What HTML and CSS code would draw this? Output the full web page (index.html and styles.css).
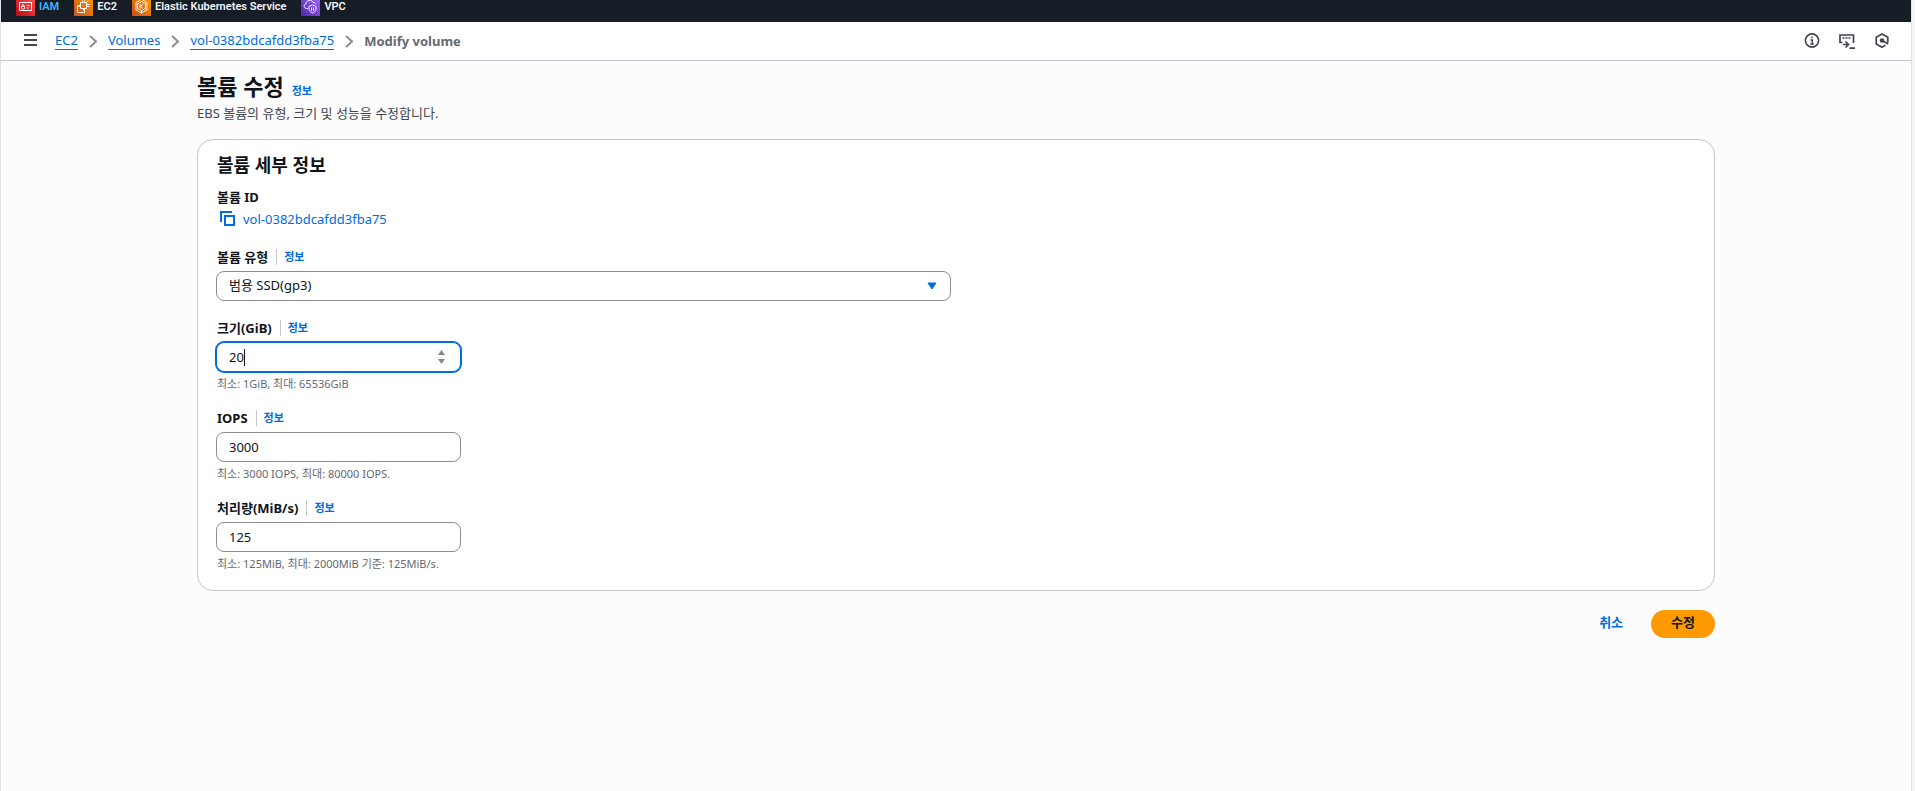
FILE: index.html
```html
<!DOCTYPE html>
<html lang="ko">
<head>
<meta charset="utf-8">
<title>볼륨 수정</title>
<link rel="stylesheet" href="styles.css">
</head>
<body>
<div class="shell">
  <nav class="services" aria-label="Favorites">
    <a class="service service-current" href="#iam">
      <svg class="service-icon" viewBox="0 0 19 19"><defs><linearGradient id="red" x1="0" y1="1" x2="1" y2="0"><stop stop-color="#bd0816"/><stop offset="1" stop-color="#ff5252"/></linearGradient></defs><rect width="19" height="19" fill="url(#red)"/><g fill="none" stroke="#fff"><path d="M3.500 5.500h12v8h-12z"/><path d="M5.500 9.500h3v2.500h-3zM6 9.500v-1.500q1-1 2 0v1.500M10.500 8.500h3.500M10.500 11h2.500" stroke-width=".8"/></g></svg>
      <span>IAM</span></a>
    <a class="service" href="#ec2">
      <svg class="service-icon" viewBox="0 0 19 19"><defs><linearGradient id="orange" x1="0" y1="1" x2="1" y2="0"><stop stop-color="#c8511b"/><stop offset="1" stop-color="#ff9900"/></linearGradient></defs><rect width="19" height="19" fill="url(#orange)"/><g fill="none" stroke="#fff"><path d="M6.500 5.500h6v6h-6z"/><path d="M6.500 8.500h-3v7h7v-4M8.500 5.500v-2M10.500 5.500v-2M12.500 7.500h3M12.500 9.500h3M9.500 11.500v2M6.500 9.500h-2M12.500 5.500l2-2" stroke-width=".9"/></g></svg>
      <span>EC2</span></a>
    <a class="service" href="#eks">
      <svg class="service-icon" viewBox="0 0 19 19"><rect width="19" height="19" fill="url(#orange)"/><g fill="none" stroke="#fff" stroke-width=".9"><path d="M8.500 3L4 5.500v7.500l5.500 3 5.500-3V5.500L10.500 3"/><path d="M9.500 4.500l4 2.300v4.600l-4 2.300-4-2.300V6.800z"/><path d="M8 7v4.500M11 7L8.500 9.200 11 11.500M9.500 13.500V16"/></g></svg>
      <span>Elastic Kubernetes Service</span></a>
    <a class="service" href="#vpc">
      <svg class="service-icon" viewBox="0 0 19 19"><defs><linearGradient id="purple" x1="0" y1="1" x2="1" y2="0"><stop stop-color="#4d27aa"/><stop offset="1" stop-color="#a166ff"/></linearGradient></defs><rect width="19" height="19" fill="url(#purple)"/><g fill="none" stroke="#fff" stroke-width=".9"><path d="M7 11.500H5.500C2.500 11 2.500 7.500 5 7c0-4 5.500-5 7-1.500 1.500-.3 2.500.5 2.500 1.500"/><path d="M11.500 8l3.500 1.300v3c0 2-2 3-3.500 3.700-1.500-.7-3.500-1.700-3.500-3.700v-3zM10.500 10.500v3.500M12.500 10.500v3.500"/></g></svg>
      <span>VPC</span></a>
  </nav>
  <header class="toolbar">
    <button class="icon-button" type="button" aria-label="Menu"><svg width="16" height="16" viewBox="0 0 16 16"><path d="M1 2h13M1 7h13M1 12h13" stroke="#424650" stroke-width="2"/></svg></button>
    <nav class="crumbs" aria-label="Breadcrumb">
      <a href="#ec2-home">EC2</a>
      <svg class="chevron" viewBox="0 0 8 13"><path d="M1 1l6 5.500L1 12"/></svg>
      <a href="#volumes">Volumes</a>
      <svg class="chevron" viewBox="0 0 8 13"><path d="M1 1l6 5.500L1 12"/></svg>
      <a href="#volume">vol-0382bdcafdd3fba75</a>
      <svg class="chevron" viewBox="0 0 8 13"><path d="M1 1l6 5.500L1 12"/></svg>
      <span class="crumb-current">Modify volume</span>
    </nav>
    <div class="tools">
      <button class="icon-button" type="button" aria-label="Info"><svg width="16" height="16" viewBox="0 0 16 16" fill="none" stroke="#424650" stroke-width="1.600"><circle cx="8" cy="7.500" r="6.600"/><path d="M8 3.500v1.800M6.500 7h1.800v4M6.300 11h3.600" stroke-width="1.400"/></svg></button>
      <button class="icon-button" type="button" aria-label="CloudShell"><svg width="16" height="16" viewBox="0 0 16 16" fill="none" stroke="#424650" stroke-width="1.700"><path d="M3.500 9.500H1V2h13.500v8"/><path d="M3.500 5h2M6.500 5h2M9.500 5h2M4 11.500h5M6.500 8.500l3 3-3 3M10.500 15.100h5.500"/></svg></button>
      <button class="icon-button" type="button" aria-label="Amazon Q"><svg width="16" height="16" viewBox="0 0 16 16" fill="none" stroke="#424650" stroke-width="1.700"><path d="M13.800 9.500V4.300L8 1 2.200 4.300v6.600L8 14.200l3.400-1.900M8 7.500l6.200 3.600"/><circle cx="8" cy="7.500" r="1.400" fill="#424650"/></svg></button>
    </div>
  </header>
  <main class="content">
    <div class="page-title">
      <div class="title-row"><h1>볼륨 수정</h1><a class="info" href="#info">정보</a></div>
      <p class="description">EBS 볼륨의 유형, 크기 및 성능을 수정합니다.</p>
    </div>
    <form class="form">
      <section class="card">
        <h2>볼륨 세부 정보</h2>
        <div class="volume-id">
          <div class="label">볼륨 ID</div>
          <div class="id-row">
            <button class="icon-button" type="button" aria-label="복사"><svg width="16" height="16" viewBox="0 0 16 16" fill="none" stroke="#006ce0" stroke-width="2"><path d="M5 5h9v9H5zM1 11V1h11"/></svg></button>
            <a href="#vol">vol-0382bdcafdd3fba75</a>
          </div>
        </div>
        <div class="fields">
          <div class="field">
            <div class="label-row"><label class="label" for="type">볼륨 유형</label><a class="info divided" href="#type-info">정보</a></div>
            <div class="control"><select id="type" class="input"><option>범용 SSD(gp3)</option></select>
              <svg class="caret-down" viewBox="0 0 10 8"><path d="M1 1h8L5 7z" fill="#006ce0" stroke="#006ce0" stroke-linejoin="round"/></svg></div>
          </div>
          <div class="field">
            <div class="label-row"><label class="label" for="size">크기(GiB)</label><a class="info divided" href="#size-info">정보</a></div>
            <div class="control narrow"><input id="size" class="input focused" type="number" value="20">
              <span class="text-cursor"></span>
              <svg class="stepper" viewBox="0 0 13 16"><path fill="#fafafa" d="M0 0h13v16H0z"/><path d="M6.500 1l3.500 5H3zM6.500 15L3 10h7z" fill="#888"/></svg></div>
            <p class="hint">최소: 1GiB, 최대: 65536GiB</p>
          </div>
          <div class="field">
            <div class="label-row"><label class="label" for="iops">IOPS</label><a class="info divided" href="#iops-info">정보</a></div>
            <div class="control narrow"><input id="iops" class="input" type="number" value="3000"></div>
            <p class="hint">최소: 3000 IOPS, 최대: 80000 IOPS.</p>
          </div>
          <div class="field">
            <div class="label-row"><label class="label" for="rate">처리량(MiB/s)</label><a class="info divided" href="#rate-info">정보</a></div>
            <div class="control narrow"><input id="rate" class="input" type="number" value="125"></div>
            <p class="hint">최소: 125MiB, 최대: 2000MiB 기준: 125MiB/s.</p>
          </div>
        </div>
      </section>
      <div class="actions">
        <button class="button" type="button">취소</button>
        <button class="button primary" type="submit">수정</button>
      </div>
    </form>
  </main>
</div>
</body>
</html>
```
FILE: styles.css
```css
* { box-sizing: border-box; }
body {
  margin: 0;
  background: #f4f4f5;
  color: #0f141a;
  font: 13px/20px "Noto Sans", "Noto Sans CJK KR", sans-serif;
}
h1, h2, p { margin: 0; }
a { color: #006ce0; text-decoration: none; }
svg { display: block; flex: none; }
button, input, select { font: inherit; color: inherit; }
.shell {
  min-height: 100vh;
  margin-right: 3px;
  background: #fcfcfd;
  border: solid #e2e2e4;
  border-width: 0 1px;
}
.services {
  display: flex;
  align-items: flex-start;
  gap: 15px;
  height: 22px;
  padding: 0 15px;
  background: #161d26;
}
.service {
  display: flex;
  align-items: flex-start;
  gap: 4px;
  color: #f3f3f7;
  font: 600 11px/13px Roboto, "Noto Sans", sans-serif;
}
.service-current { color: #42b4ff; }
.service-icon { width: 19px; height: 19px; margin-top: -3px; }
.toolbar {
  display: flex;
  align-items: center;
  height: 39px;
  padding: 0 21px 0 22px;
  background: #fff;
  border-bottom: 1px solid #c6c6cd;
}
.icon-button { padding: 0; border: 0; background: none; }
.crumbs { display: flex; align-items: center; gap: 11px; margin-left: 16px; }
.crumbs a { line-height: 17px; border-bottom: 1px solid #006ce0; }
.crumb-current { color: #656871; font-weight: 700; line-height: 18px; }
.chevron { width: 8px; height: 13px; fill: none; stroke: #8c8c94; stroke-width: 2; }
.tools { display: flex; gap: 19px; margin-left: auto; }
.content {
  max-width: 1518px;
  margin: 0 auto;
  padding: 10px 0 24px;
}
.title-row { display: flex; align-items: baseline; gap: 8px; margin-bottom: 2px; }
h1 { font-size: 22px; line-height: 30px; }
h2 { font-size: 18px; line-height: 24px; }
.info { font-size: 11px; line-height: 16px; font-weight: 700; }
.description { color: #424650; line-height: 20px; }
.form { display: grid; gap: 19px; margin-top: 16px; }
.card {
  padding: 13px 19px 19px;
  background: #fff;
  border: 1px solid #c6c6cd;
  border-radius: 16px;
}
.volume-id { margin: 10px 0 16px; }
.label { font-weight: 700; line-height: 20px; }
.id-row { display: flex; align-items: center; gap: 7px; padding-left: 3px; height: 24px; }
.fields { display: grid; gap: 17px; width: calc(50% - 4px); margin-left: -1px; }
.label-row { display: flex; align-items: center; height: 20px; margin-bottom: 4px; padding-left: 1px; }
.divided { margin-left: 8px; padding-left: 7px; border-left: 1px solid #c6c6cd; }
.control { position: relative; }
.narrow { width: 33.3%; }
.input {
  display: block;
  width: 100%;
  height: 30px;
  padding: 0 12px;
  border: 1px solid #8c8c94;
  border-radius: 8px;
  background: #fff;
  appearance: none;
  outline: none;
}
select.input { padding-bottom: 2px; }
.input::-webkit-inner-spin-button { display: none; }
.focused { border-color: #006ce0; box-shadow: 0 0 0 1px #006ce0; }
.caret-down { position: absolute; right: 14px; top: 11px; width: 10px; height: 8px; }
.text-cursor { position: absolute; left: 28px; top: 7px; width: 1px; height: 17px; background: #0f141a; }
.stepper { position: absolute; right: 13px; top: 7px; width: 13px; height: 16px; }
.hint { margin-top: 4px; padding-left: 1px; color: #656871; font-size: 11px; line-height: 15px; }
.actions { display: flex; justify-content: flex-end; gap: 8px; }
.button {
  height: 28px;
  padding: 0 20px 4px;
  border: 0;
  border-radius: 14px;
  background: none;
  color: #006ce0;
  font-weight: 700;
}
.primary { background: #ff9900; color: #0f141a; }
```
